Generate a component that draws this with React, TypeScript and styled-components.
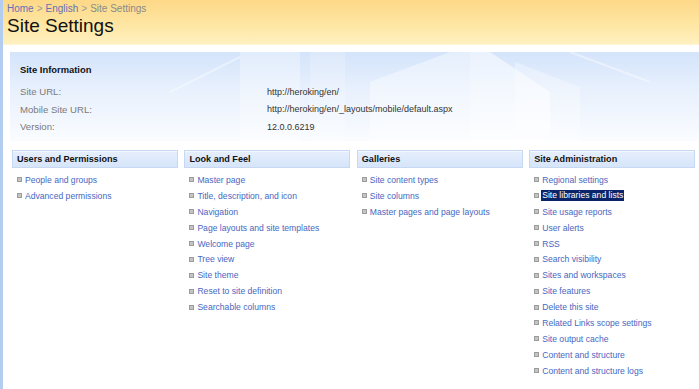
import styled, { createGlobalStyle } from "styled-components";

const GlobalStyle = createGlobalStyle`
  html, body {
    margin: 0;
    padding: 0;
    background: #ffffff;
  }
  body {
    font-family: "Liberation Sans", Arial, sans-serif;
    color: #000;
  }
`;

const Page = styled.div`
  width: 699px;
  height: 389px;
  box-sizing: border-box;
  border-left: 3px solid #b3cdf1;
  overflow: hidden;
`;

const TitleBar = styled.div`
  height: 45px;
  box-sizing: border-box;
  padding: 3px 0 0 4px;
  background: linear-gradient(to bottom, #fdd887 0%, #fee6a2 55%, #fff0c0 100%);
  border-bottom: 1px solid #fff6d8;
`;

const Breadcrumb = styled.div`
  font-size: 10px;
  line-height: 12px;
  color: #8a8a8a;
`;

const Crumb = styled.span<{ $link?: boolean }>`
  color: ${(p) => (p.$link ? "#6670b3" : "#8a8a8a")};
`;

const Sep = styled.span`
  color: #9a9a9a;
  margin: 0 3px;
`;

const Title = styled.h1`
  margin: -1px 0 0;
  font-size: 19px;
  font-weight: normal;
  line-height: 24px;
  color: #111;
`;

const Content = styled.div`
  padding: 7px 0 0 7px;
`;

const InfoBox = styled.div`
  position: relative;
  height: 89px;
  box-sizing: border-box;
  padding: 12px 10px 0 10px;
  background: linear-gradient(to bottom, #d4e4fb 0%, #e9f1fd 45%, #fafcff 100%);
  overflow: hidden;
`;

const Skyline = styled.svg`
  position: absolute;
  left: 160px;
  top: 0;
  width: 529px;
  height: 89px;
`;

const InfoInner = styled.div`
  position: relative;
`;

const InfoTitle = styled.div`
  font-size: 9.4px;
  font-weight: bold;
  line-height: 12px;
  color: #111;
  margin-bottom: 7px;
`;

const InfoRow = styled.div`
  display: grid;
  grid-template-columns: 247px 1fr;
  height: 17.5px;
  align-items: center;
`;

const InfoLabel = styled.span`
  font-size: 9.6px;
  color: #7a7a7a;
`;

const InfoValue = styled.span`
  font-size: 9px;
  color: #333;
`;

const Columns = styled.div`
  display: grid;
  grid-template-columns: repeat(4, 166px);
  column-gap: 6.4px;
  margin: 9px 0 0 2px;
`;

const Section = styled.div``;

const SectionHead = styled.div`
  height: 18px;
  box-sizing: border-box;
  padding-left: 4px;
  border: 1px solid #c6d8f2;
  box-shadow: inset 0 1px 0 #f4f8fe;
  background: linear-gradient(to bottom, #e6effc 0%, #d6e5fa 100%);
  font-size: 9.1px;
  font-weight: bold;
  line-height: 16px;
  color: #111;
`;

const List = styled.ul`
  list-style: none;
  margin: 4px 0 0;
  padding: 0 0 0 5px;
`;

const Item = styled.li`
  display: flex;
  align-items: center;
  height: 15.9px;
  font-size: 8.6px;
  color: #4767c0;
`;

const Bullet = styled.span`
  width: 3px;
  height: 3px;
  border: 1px solid #9c9c9c;
  background: #c4c4c4;
  margin-right: 2px;
  flex-shrink: 0;
`;

const LinkText = styled.span<{ $selected?: boolean }>`
  padding: 0 1px;
  ${(p) =>
    p.$selected &&
    `
    background: #0a246a;
    color: #ffffff;
    line-height: 11px;
  `}
`;

const sections: { title: string; items: string[] }[] = [
  {
    title: "Users and Permissions",
    items: ["People and groups", "Advanced permissions"],
  },
  {
    title: "Look and Feel",
    items: [
      "Master page",
      "Title, description, and icon",
      "Navigation",
      "Page layouts and site templates",
      "Welcome page",
      "Tree view",
      "Site theme",
      "Reset to site definition",
      "Searchable columns",
    ],
  },
  {
    title: "Galleries",
    items: ["Site content types", "Site columns", "Master pages and page layouts"],
  },
  {
    title: "Site Administration",
    items: [
      "Regional settings",
      "Site libraries and lists",
      "Site usage reports",
      "User alerts",
      "RSS",
      "Search visibility",
      "Sites and workspaces",
      "Site features",
      "Delete this site",
      "Related Links scope settings",
      "Site output cache",
      "Content and structure",
      "Content and structure logs",
    ],
  },
];

const info = [
  { label: "Site URL:", value: "http://heroking/en/" },
  { label: "Mobile Site URL:", value: "http://heroking/en/_layouts/mobile/default.aspx" },
  { label: "Version:", value: "12.0.0.6219" },
];

export default function App() {
  return (
    <>
      <GlobalStyle />
      <Page>
        <TitleBar>
          <Breadcrumb>
            <Crumb $link>Home</Crumb>
            <Sep>&gt;</Sep>
            <Crumb $link>English</Crumb>
            <Sep>&gt;</Sep>
            <Crumb>Site Settings</Crumb>
          </Breadcrumb>
          <Title>Site Settings</Title>
        </TitleBar>
        <Content>
          <InfoBox>
            <Skyline viewBox="0 0 529 89" preserveAspectRatio="none">
              <g fill="#ffffff">
                <polygon points="70,0 130,0 130,89 70,89" opacity="0.3" />
                <polygon points="140,0 175,0 175,89 140,89" opacity="0.2" />
                <polygon points="200,30 280,0 300,0 300,89 200,89" opacity="0.4" />
                <polygon points="300,0 320,0 380,40 380,89 300,89" opacity="0.5" />
                <polygon points="345,10 410,35 410,89 345,89" opacity="0.3" />
              </g>
              <g stroke="#ffffff" strokeWidth="2" opacity="0.4">
                <line x1="0" y1="40" x2="70" y2="5" />
                <line x1="400" y1="0" x2="480" y2="30" />
              </g>
            </Skyline>
            <InfoInner>
              <InfoTitle>Site Information</InfoTitle>
              {info.map((row) => (
                <InfoRow key={row.label}>
                  <InfoLabel>{row.label}</InfoLabel>
                  <InfoValue>{row.value}</InfoValue>
                </InfoRow>
              ))}
            </InfoInner>
          </InfoBox>
          <Columns>
            {sections.map((s) => (
              <Section key={s.title}>
                <SectionHead>{s.title}</SectionHead>
                <List>
                  {s.items.map((it) => (
                    <Item key={it}>
                      <Bullet />
                      <LinkText $selected={it === "Site libraries and lists"}>{it}</LinkText>
                    </Item>
                  ))}
                </List>
              </Section>
            ))}
          </Columns>
        </Content>
      </Page>
    </>
  );
}
